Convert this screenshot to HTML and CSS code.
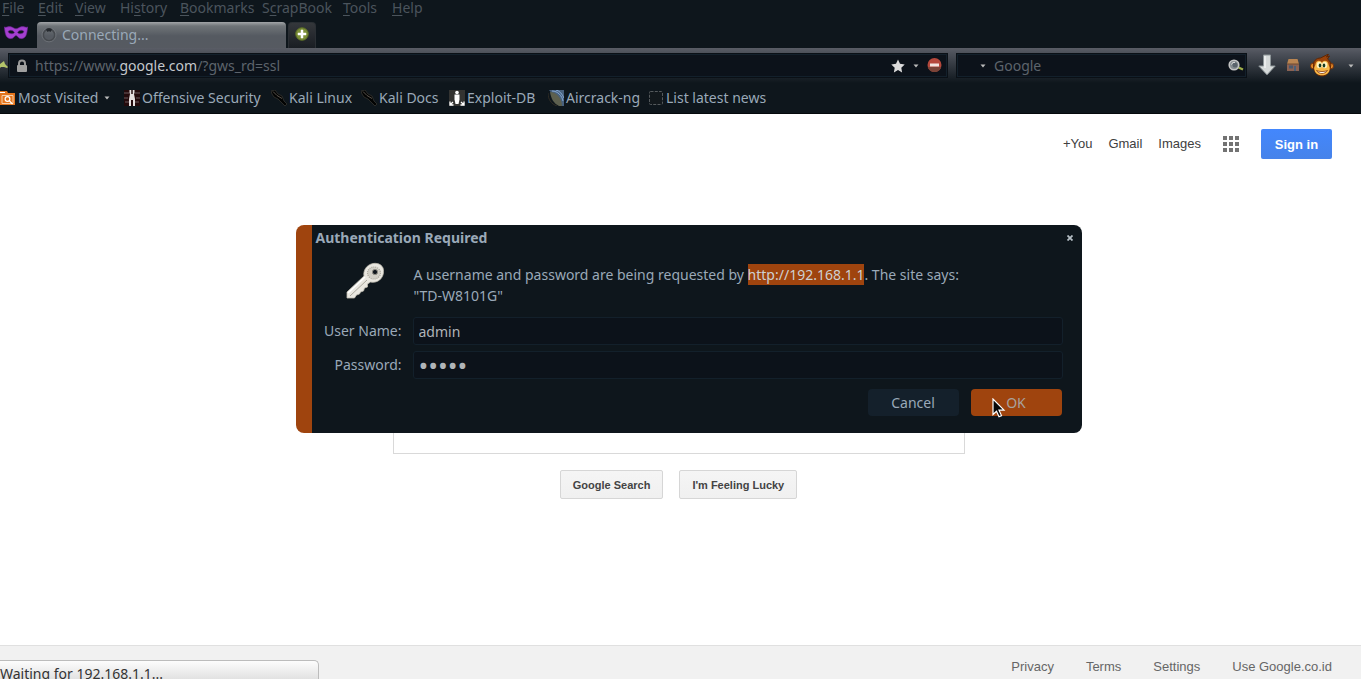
FILE: index.html
```html
<!DOCTYPE html>
<html lang="en">
<head>
<meta charset="utf-8">
<title>Connecting...</title>
<link rel="stylesheet" href="styles.css">
</head>
<body>
<header class="chrome">
  <nav class="menubar" aria-label="Menu">
    <button class="menu"><u>F</u>ile</button>
    <button class="menu"><u>E</u>dit</button>
    <button class="menu"><u>V</u>iew</button>
    <button class="menu">Hi<u>s</u>tory</button>
    <button class="menu"><u>B</u>ookmarks</button>
    <button class="menu">S<u>c</u>rapBook</button>
    <button class="menu"><u>T</u>ools</button>
    <button class="menu"><u>H</u>elp</button>
  </nav>
  <div class="tabs">
    <svg class="mask" width="24" height="14" viewBox="0 0 24 14" aria-hidden="true"><path fill="#a43fd0" stroke="#6a2390" stroke-width=".6" fill-rule="evenodd" d="M0 1C3 2 4 0 7 .8c2 .4 3.500 2 5 2s3-1.600 5-2C20 0 21 2 24 1c-1 2-.5 5-2 8.500-1 2.500-3.500 3.500-6 3-2-.4-2.500-3-4-3s-2 2.600-4 3c-2.500.5-5-.5-6-3C.5 6 1 3 0 1zM4 5.500C5 8 9 8.500 10.500 6.500 9 4 6 3.500 4 5.500zm9.500 1C15 8.500 19 8 20 5.500c-2-2-5-1.500-6.500 1z"/></svg>
    <button class="tab">
      <svg width="16" height="16" viewBox="0 0 16 16" aria-hidden="true"><circle cx="8" cy="8" r="5.800" fill="none" stroke="#45494e" stroke-width="1.800"/><path d="M4.500 1.800a7 7 0 1 0 7 0" fill="none" stroke="#787d83" stroke-width=".7"/><path d="M5 2.500C6.500.7 9.500.7 11 2.500L9.500 5C8.500 4 7.500 4 6.500 5z" fill="#24282d"/></svg>
      <span>Connecting...</span>
    </button>
    <button class="newtab" aria-label="New tab">
      <svg width="14" height="14" viewBox="0 0 14 14"><circle cx="7" cy="7" r="6.300" fill="#7d9038" stroke="#586a26"/><path d="M6 3h2v3h3v2H8v3H6V8H3V6h3z" fill="#fff" stroke="#fff" stroke-width=".5"/></svg>
    </button>
  </div>
  <div class="toolbar">
    <svg class="nub" width="8" height="14" viewBox="0 0 8 14" aria-hidden="true"><path d="M0 5 4 2l1 3 3 3-1 1-3-1H1L0 9z" fill="#b3c46a"/></svg>
    <div class="field url">
      <svg width="12" height="14" viewBox="0 0 12 14" aria-hidden="true"><path d="M3 7V4.500a3 3 0 0 1 6 0V7" fill="none" stroke="#999" stroke-width="2"/><rect x="1" y="6" width="10" height="7" rx="1" fill="#a0a0a0"/></svg>
      <a class="address" href="#">https://www.<b>google.com</b>/?gws_rd=ssl</a>
      <button class="icon" aria-label="Bookmark this page"><svg width="14" height="14" viewBox="0 0 14 14"><path d="m7 .5 2 4.300 4.700.6-3.400 3.300.8 4.700L7 11.100l-4.100 2.300.8-4.700L.3 5.400 5 4.800z" fill="#dcdcdc"/></svg></button>
      <button class="icon" aria-label="Show history"><svg width="6" height="4" viewBox="0 0 6 4"><path d="M.5.5h5L3 3.500z" fill="#bbb"/></svg></button>
      <button class="icon" aria-label="Stop"><svg width="15" height="16" viewBox="0 0 15 16"><circle cx="7.500" cy="7" r="7" fill="#b5483c"/><path d="M.8 9a7 7 0 0 0 13.400 0z" fill="#7a4438"/><rect x="3" y="5.500" width="9" height="3" fill="#f1e4df"/></svg></button>
    </div>
    <div class="field search">
      <svg width="6" height="4" viewBox="0 0 6 4" aria-hidden="true"><path d="M.5.5h5L3 3.500z" fill="#bbb"/></svg>
      <input type="text" placeholder="Google" aria-label="Search">
      <button class="icon" aria-label="Go"><svg width="16" height="14" viewBox="0 0 16 14"><path d="m10.500 8.500 4.500 2" stroke="#a0b04a" stroke-width="2.200"/><circle cx="6" cy="6" r="4.800" fill="#858c90" stroke="#c4c4c4" stroke-width="1.600"/><circle cx="7" cy="6" r="2.500" fill="#5b646c"/><path d="M3.500 5.500C4 3.800 5.500 3 7 3.400" stroke="#e5e5e5" fill="none"/></svg></button>
    </div>
    <div class="extras">
      <button class="icon" aria-label="Downloads"><svg width="18" height="24" viewBox="0 0 18 24"><path d="M5.500 1h7v11h4.700L9 20.800.8 12h4.700z" fill="#d6dada" stroke="#8e9699"/><path d="M7 2v12" stroke="#fff"/></svg></button>
      <button class="icon" aria-label="Package"><svg width="14" height="14" viewBox="0 0 14 14"><path d="M2.500 0h9L13 5H1z" fill="#b98552"/><path d="M1 5h12v7H1z" fill="#8a6254"/><path d="M3 6.500h4v3H3z" fill="#4b586b"/><path d="M8 7h2v5H8z" fill="#496078"/><path d="M1 5h12" stroke="#6e4a30"/></svg></button>
      <button class="icon" aria-label="Greasemonkey"><svg width="24" height="24" viewBox="0 0 24 24"><circle cx="3.500" cy="12" r="3" fill="#e98f2b" stroke="#72300a"/><circle cx="20.500" cy="12" r="3" fill="#e98f2b" stroke="#72300a"/><path d="M3.500 13c-1-6 3-9 7-9l8-4-2 3 3-1-2 3c3 2 4 5 3 8-1 6-4 9-8.500 9S4.500 19 3.500 13z" fill="#9a430b" stroke="#602704"/><path d="M4.500 16c-1-3 1-4 1-6 1-4 5-4 6.500-1 1-3 5.500-3 6.500 1 0 2 2 3 1 6-1 7-14 7-15 0z" fill="#f7b848"/><ellipse cx="9.300" cy="11" rx="2.600" ry="3.300" fill="#fff3c1"/><ellipse cx="14.700" cy="11" rx="2.600" ry="3.300" fill="#fff3c1"/><ellipse cx="10" cy="11.500" rx="1.300" ry="2" fill="#163a20"/><ellipse cx="14" cy="11.500" rx="1.300" ry="2" fill="#163a20"/><path d="M6.500 16.500c3 4 8 4 11 0-3 1.400-8 1.400-11 0z" fill="#fff" stroke="#893c0c" stroke-width=".8"/></svg></button>
      <button class="icon last" aria-label="More"><svg width="6" height="4" viewBox="0 0 6 4"><path d="M.5.5h5L3 3.500z" fill="#bbb"/></svg></button>
    </div>
  </div>
  <nav class="bookmarks" aria-label="Bookmarks">
    <a href="#"><svg width="16" height="16" viewBox="0 0 16 16"><path d="M0 1h7l1 2h7v12H0z" fill="#e4741b"/><path d="M2 5.500h11v8H2z" fill="none" stroke="#f5cfaa"/><circle cx="7.500" cy="9" r="2.400" fill="none" stroke="#fff" stroke-width="1.200"/><path d="m9.500 11 3 3M0 2.500h5" stroke="#fff" stroke-width="1.200"/></svg><span>Most Visited</span><svg class="drop" width="6" height="4" viewBox="0 0 6 4"><path d="M.5.5h5L3 3.500z" fill="#bbb"/></svg></a>
    <a href="#"><svg width="16" height="16" viewBox="0 0 16 16"><path d="M0 0h16v16H0z" fill="#240a0c"/><path d="M0 3h5M0 8h4M1 12h4M11 3h5M12 8h4M11 12h4" stroke="#544043" stroke-width="1.500"/><path d="M5.500 0h5v3l-.5 1 1 5v7H9v-6H7v6H5V9l1-5-.5-1z" fill="#e6dfdf"/><path d="M7 0h2v4H7z" fill="#584446"/></svg><span>Offensive Security</span></a>
    <a href="#"><svg width="16" height="16" viewBox="0 0 16 16"><path d="m0 1 4-1 3 4 4 2 2 5 3 3-2 2-4-4-3-3-4-2-2-3z" fill="#020303" stroke="#35332f" stroke-width=".8"/><path d="m2 1.500 4 4 5 3" stroke="#5d564e" fill="none"/></svg><span>Kali Linux</span></a>
    <a href="#"><svg width="16" height="16" viewBox="0 0 16 16"><path d="m0 1 4-1 3 4 4 2 2 5 3 3-2 2-4-4-3-3-4-2-2-3z" fill="#020303" stroke="#35332f" stroke-width=".8"/><path d="m2 1.500 4 4 5 3" stroke="#5d564e" fill="none"/></svg><span>Kali Docs</span></a>
    <a href="#"><svg width="16" height="16" viewBox="0 0 16 16"><path d="M0 0h16v16H0z" fill="#333331"/><circle cx="8" cy="2.500" r="1.800" fill="#fff"/><path d="M5.500 4.500h5v5L9.500 14h-3l-1-4.500z" fill="#fff"/><path d="M1 11.500V15h3.500M15 11.500V15h-3.500M1.500 14.500l2.500-2.500M14.500 14.500 12 12" fill="none" stroke="#fff" stroke-width="1.300"/></svg><span>Exploit-DB</span></a>
    <a href="#"><svg width="16" height="16" viewBox="0 0 16 16"><path d="M1 0h15v16h-4C9 12 9 9 6 6z" fill="#48617e"/><path d="M2 2c6 0 12 6 12 14h-3C5 13 3 8 2 2z" fill="#5d604f"/><path d="M4 1c6 0 10 5 11 10M8 0c4 1 6 4 8 8" fill="none" stroke="#86a9d4"/><path d="M0 3c0 6 3 11 9 13" stroke="#302c24" fill="none"/></svg><span>Aircrack-ng</span></a>
    <a href="#"><svg width="16" height="16" viewBox="0 0 16 16"><rect x="1.500" y="1.500" width="13" height="13" rx="1" fill="#12181c" stroke="#555a5d" stroke-dasharray="3 1.300"/></svg><span>List latest news</span></a>
  </nav>
</header>

<main class="page">
  <nav class="account">
    <a href="#">+You</a>
    <a href="#">Gmail</a>
    <a href="#">Images</a>
    <button class="apps" aria-label="Apps"><svg width="16" height="16" viewBox="0 0 16 16"><path d="M0 0h4v4H0zM6 0h4v4H6zM12 0h4v4h-4zM0 6h4v4H0zM6 6h4v4H6zM12 6h4v4h-4zM0 12h4v4H0zM6 12h4v4H6zM12 12h4v4h-4z" fill="#737373"/></svg></button>
    <a class="signin" href="#">Sign in</a>
  </nav>
  <form class="query">
    <input type="text" aria-label="Search Google">
    <div class="actions">
      <button type="button">Google Search</button>
      <button type="button">I'm Feeling Lucky</button>
    </div>
  </form>
</main>

<footer class="footer">
  <a href="#">Privacy</a>
  <a href="#">Terms</a>
  <a href="#">Settings</a>
  <a href="#">Use Google.co.id</a>
</footer>

<div class="status" role="status">Waiting for 192.168.1.1...</div>

<form class="dialog" role="dialog" aria-labelledby="dialog-title">
  <div class="titlebar">
    <h1 id="dialog-title">Authentication Required</h1>
    <button type="button" class="icon" aria-label="Close"><svg width="6" height="6" viewBox="0 0 6 6"><path d="M.5.5l5 5M5.500.5l-5 5" stroke="#b4bdc4" stroke-width="1.800"/></svg></button>
  </div>
  <div class="fields">
    <svg class="key" width="40" height="38" viewBox="0 0 40 38" aria-hidden="true"><path fill="#e9e7e0" stroke="#bebbb0" stroke-width=".8" fill-rule="evenodd" d="M18 14c-1-5 2-11 9-12.500C33 .5 38 4 37.500 9.500c0 7-6 12-13 10.500l-3 2v3l-3 1-1 3-3 1-1 2-3 1-2 3H1v-6zM29 7a3 3 0 1 0 .1 0z"/><path d="m2 31 17-16" stroke="#fff" stroke-width="1.500" fill="none"/><path d="m4 34 17-16" stroke="#aaa79d" fill="none"/><ellipse cx="28" cy="11" rx="6.500" ry="6" fill="#d2d0c7" stroke="#a8a69b" stroke-width="1.200" stroke-dasharray="1 1"/><circle cx="29" cy="10" r="2.600" fill="#0f171d" stroke="#8f8d84"/></svg>
    <p class="message">A username and password are being requested by <mark>http://192.168.1.1</mark>. The site says: "TD-W8101G"</p>
    <label for="user">User Name:</label>
    <input id="user" type="text" value="admin">
    <label for="pass">Password:</label>
    <input id="pass" type="password" value="admin">
  </div>
  <div class="buttons">
    <button type="button">Cancel</button>
    <button type="button" class="primary">OK</button>
  </div>
  <svg class="cursor" width="14" height="20" viewBox="0 0 14 20" aria-hidden="true"><path d="M1 1v15.500l3.500-3.300 2.500 5.600 2.500-1.200L7 12.200h5z" fill="#080808" stroke="#fff" stroke-width="1.200"/></svg>
</form>
</body>
</html>
```

FILE: styles.css
```css
* { box-sizing: border-box; }

body {
  margin: 0;
  min-height: 100vh;
  display: flex;
  flex-direction: column;
  position: relative;
  overflow: hidden;
  background: #fff;
  font: 14px/20px "Noto Sans", "Open Sans", sans-serif;
}

svg { display: block; flex: none; }
a { color: inherit; text-decoration: none; }
button, input { font: inherit; color: inherit; }
button { padding: 0; border: 0; background: none; }

.chrome { background: #0e161c; color: #9aa9b8; border-bottom: 1px solid #05090c; }

.menubar {
  display: grid;
  grid-template-columns: 36px 37px 45px 60px 82px 81px 49px 40px;
  padding: 0 2px;
  height: 20px;
  color: #4b545c;
}
.menu { text-align: left; white-space: nowrap; line-height: 16px; height: 16px; }
.menu u { text-underline-offset: 2px; }

.tabs { display: flex; height: 28px; padding: 2px 0 0 4px; }
.mask { margin: 4px 9px 0 0; }
.tab {
  display: flex;
  align-items: center;
  gap: 5px;
  width: 249px;
  padding: 0 4px;
  border-radius: 4px 4px 0 0;
  background: linear-gradient(#a2a5a8, #6f7478 4px, #555a61 14px, #565a61);
}
.newtab {
  display: grid;
  place-items: center;
  width: 28px;
  margin-left: 2px;
  padding-bottom: 3px;
  border: 1px solid #2a2f34;
  border-bottom: 0;
  border-radius: 4px 4px 0 0;
  background: linear-gradient(#34373b, #191d23);
}

.toolbar {
  display: flex;
  align-items: center;
  height: 35px;
  background: linear-gradient(#5a5d66, #4d515a 5px, #0e161c);
}
.field {
  display: flex;
  align-items: center;
  height: 25px;
  background: #0c121a;
  border: 1px solid #0a1016;
  box-shadow: inset 0 0 0 1px #13202b;
}
.url { flex: 1; padding: 0 5px 0 7px; }
.address { flex: 1; margin-left: 7px; color: #5d646c; }
.address b { font-weight: 400; color: #c4c8cc; }
.icon { display: grid; place-items: center; }
.url .icon { margin-left: 8px; }
.search { width: 291px; margin-left: 8px; padding: 0 2px 0 23px; }
.search input { flex: 1; min-width: 0; padding: 0 8px; border: 0; background: none; outline: 0; }
.search input::placeholder { color: #5d646c; opacity: 1; }
.extras { display: flex; align-items: center; gap: 10px; padding: 0 7px 0 11px; }
.extras .last { margin-left: 4px; }

.bookmarks {
  display: grid;
  grid-template-columns: 124px 147px 90px 88px 99px 100px 160px;
  height: 30px;
  align-items: center;
}
.bookmarks a { display: flex; align-items: center; gap: 2px; white-space: nowrap; }
.drop { margin-left: 4px; }

.page { flex: 1; color: #404040; font-family: "Liberation Sans", Arial, sans-serif; }
.account { display: flex; justify-content: flex-end; align-items: center; gap: 16px; padding: 15px 29px 0; font-size: 13px; }
.account a { line-height: 22px; }
.apps { padding: 0 6px; }
.account .signin {
  width: 71px;
  height: 30px;
  line-height: 31px;
  text-align: center;
  color: #fff;
  font-weight: 700;
  border-radius: 2px;
  background: linear-gradient(#4387fd, #4683ea);
}
.query { width: 576px; margin: 257px auto 0; padding-right: 4px; }
.query input { display: block; width: 100%; height: 38px; border: 1px solid #d9d9d9; background: #fff; }
.actions { display: flex; justify-content: center; gap: 16px; padding-top: 16px; }
.actions button {
  height: 29px;
  padding: 0 12px;
  border: 1px solid #d6d6d6;
  border-radius: 2px;
  background: linear-gradient(#f5f5f5, #f0f0f0);
  color: #444;
  font: 700 11px/29px "Liberation Sans", Arial, sans-serif;
}

.footer {
  display: flex;
  justify-content: flex-end;
  gap: 32px;
  height: 34px;
  padding: 11px 29px 0;
  border-top: 1px solid #e0e0e0;
  background: #f1f1f1;
  color: #666;
  font-family: "Liberation Sans", Arial, sans-serif;
  font-size: 13px;
}

.status {
  position: absolute;
  left: 0;
  bottom: 0;
  width: 319px;
  height: 19px;
  padding-top: 3px;
  overflow: hidden;
  border: 1px solid #bcbcbc;
  border-width: 1px 1px 0 0;
  border-radius: 0 5px 0 0;
  background: linear-gradient(#fdfdfd, #e2e2e2);
  color: #333;
}

.dialog {
  position: absolute;
  top: 225px;
  left: calc(50% - 385px);
  width: 786px;
  padding: 3px 19px 17px 12px;
  border-left: 16px solid #9f440e;
  border-radius: 8px;
  background: #0e161c;
  color: #9aa9b8;
}
.titlebar { display: flex; justify-content: space-between; margin: 0 -19px 16px -8px; }
.titlebar .icon { width: 24px; }
.titlebar h1 { margin: 0; font-size: 14px; line-height: 20px; }
.fields { display: grid; grid-template-columns: 78px 1fr; column-gap: 11px; row-gap: 6px; align-items: center; }
.fields label { text-align: right; white-space: nowrap; }
.key { align-self: start; margin: -2px 0 0 22px; }
.message { margin: 0 0 5px; max-width: 568px; line-height: 21px; padding-left: 1px; }
.message mark { padding: 1px 0; background: #9f440e; color: #ced0d2; }
.fields input {
  width: 100%;
  height: 28px;
  padding: 0 5px;
  border: 1px solid #13202b;
  border-radius: 3px;
  background: #0c121a;
  color: #b0b4b8;
  outline: 0;
}
.fields input[type="password"] { font-size: 26px; }
.buttons { display: flex; justify-content: flex-end; gap: 12px; padding: 10px 1px 0 0; }
.buttons button { width: 91px; height: 27px; border-radius: 4px; background: #14202b; }
.buttons .primary { background: #9f440e; color: #a9a29d; }
.cursor { position: absolute; right: 76px; bottom: 15px; }
```
